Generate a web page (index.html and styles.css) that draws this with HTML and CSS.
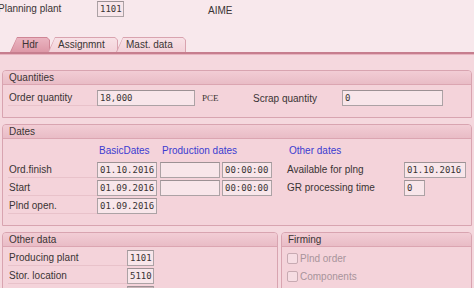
FILE: index.html
```html
<!DOCTYPE html>
<html lang="en">
<head>
  <meta charset="UTF-8">
  <title>Production order header</title>
  <link rel="stylesheet" href="styles.css">
</head>
<body>
  <div class="top">
    <div class="toprow">
      <span class="lbl-plant">Planning plant</span>
      <span class="field w26">1101</span>
      <span class="aime">AIME</span>
    </div>
  </div>

  <div class="tabs">
    <div class="tab active"><span>Hdr</span></div>
    <div class="tab"><span>Assignmnt</span></div>
    <div class="tab"><span>Mast. data</span></div>
  </div>
  <div class="tabline"></div>

  <div class="content">
    <div class="group">
      <div class="ghead">Quantities</div>
      <div class="gbody qty">
        <span class="lbl">Order quantity</span>
        <span class="field w98">18,000</span>
        <span class="unit">PCE</span>
        <span class="lbl2">Scrap quantity</span>
        <span class="field w101">0</span>
      </div>
    </div>

    <div class="group">
      <div class="ghead">Dates</div>
      <div class="gbody dates">
        <span></span>
        <span class="colhead">BasicDates</span>
        <span class="colhead span2">Production dates</span>
        <span class="colhead span2">Other dates</span>

        <span class="lbl">Ord.finish</span>
        <span><span class="field w60">01.10.2016</span></span>
        <span><span class="field w60"></span></span>
        <span><span class="field w50">00:00:00</span></span>
        <span class="lbl plain">Available for plng</span>
        <span><span class="field w62">01.10.2016</span></span>

        <span class="lbl">Start</span>
        <span><span class="field w60">01.09.2016</span></span>
        <span><span class="field w60"></span></span>
        <span><span class="field w50">00:00:00</span></span>
        <span class="lbl plain">GR processing time</span>
        <span><span class="field w21">0</span></span>

        <span class="lbl">Plnd open.</span>
        <span><span class="field w60">01.09.2016</span></span>
      </div>
    </div>

    <div class="split">
      <div class="group other">
        <div class="ghead">Other data</div>
        <div class="gbody rows">
          <div class="row"><span class="lbl wide">Producing plant</span><span class="field w26">1101</span></div>
          <div class="row"><span class="lbl wide">Stor. location</span><span class="field w26">5110</span></div>
          <div class="row"><span class="lbl wide"></span><span class="field w26 off"></span></div>
        </div>
      </div>
      <div class="group firming">
        <div class="ghead">Firming</div>
        <div class="gbody rows">
          <div class="row check"><span class="box"></span>Plnd order</div>
          <div class="row check"><span class="box"></span>Components</div>
        </div>
      </div>
    </div>
  </div>
</body>
</html>
```

FILE: styles.css
```css
body {
  margin: 0;
  width: 474px;
  height: 288px;
  overflow: hidden;
  font-family: "Liberation Sans", Arial, sans-serif;
  font-size: 10px;
  color: #3a3434;
  background: #f5d8de;
}

.top {
  height: 37px;
  background: #f8e8ec;
}
.toprow {
  display: flex;
  align-items: center;
  height: 17px;
}
.lbl-plant {
  width: 99px;
  margin-left: -2px;
}
.aime {
  margin-left: 84px;
  margin-top: 3px;
}

.field {
  display: inline-block;
  box-sizing: border-box;
  height: 16px;
  line-height: 14px;
  padding: 0 2px;
  border: 1px solid #aca2a5;
  border-top-color: #9c9194;
  background: #f8e6ea;
  font-family: "DejaVu Sans Mono", "Liberation Mono", monospace;
  font-size: 9px;
  color: #3a3434;
  white-space: nowrap;
  overflow: hidden;
}
.field.off {
  background: #c9b3b8;
}
.w21 { width: 21px; }
.w26 { width: 27px; }
.w50 { width: 50px; }
.w60 { width: 60px; }
.w62 { width: 62px; }
.w98 { width: 98px; }
.w101 { width: 101px; }

/* tabs */
.tabs {
  display: flex;
  align-items: flex-end;
  height: 15px;
  padding-left: 10px;
  background: #f8e8ec;
}
.tab {
  position: relative;
  height: 15px;
  width: 70px;
  margin-right: -2px;
  background: #d9a3af;
  clip-path: polygon(0 100%, 7px 0, calc(100% - 3px) 0, 100% 3px, 100% 100%);
}
.tab::before {
  content: "";
  position: absolute;
  inset: 1px 1px 0 1px;
  background: linear-gradient(#f8e1e6, #f3d2d9);
  clip-path: polygon(0 100%, 6px 0, calc(100% - 2px) 0, 100% 2px, 100% 100%);
}
.tab span {
  position: relative;
  display: block;
  padding-left: 10px;
  line-height: 15px;
}
.tab.active {
  width: 40px;
  background: #cf8595;
}
.tab.active::before {
  background: linear-gradient(#eab4c0, #dd98a7);
}
.tab.active span {
  padding-left: 12px;
}
.tabline {
  height: 2px;
  background: #c67e8e;
  border-bottom: 1px solid #e7b3bf;
}

/* groups */
.content {
  padding: 15px 2px 0;
}
.group {
  border: 1px solid #d8a4b0;
  border-radius: 4px 4px 0 0;
  background: #f4d3da;
  margin-bottom: 6px;
}
.ghead {
  height: 13px;
  line-height: 13px;
  padding-left: 6px;
  background: linear-gradient(#f2cdd5, #e9bcc6);
  border-bottom: 1px solid #dba5b1;
  border-radius: 3px 3px 0 0;
}
.gbody {
  padding: 5px 0 11px 5px;
}

.lbl {
  display: inline-block;
  box-sizing: border-box;
  width: 89px;
  height: 16px;
  line-height: 15px;
  padding-left: 1px;
  border-bottom: 1px solid #e8c2ca;
}
.lbl.plain {
  border-bottom: none;
}
.lbl.wide {
  width: 119px;
}

.qty {
  display: flex;
  align-items: center;
}
.unit {
  margin-left: 7px;
  width: 51px;
  font-family: "Liberation Serif", serif;
  font-size: 9px;
}
.lbl2 {
  width: 89px;
}

.dates {
  display: grid;
  grid-template-columns: 89px 63px 62px 65px 117px 62px;
  grid-auto-rows: 16px;
  row-gap: 2px;
  padding-top: 5px;
}
.dates > span {
  display: block;
}
.colhead {
  color: #3b3bd0;
  padding-left: 2px;
  line-height: 14px;
  height: 14px;
  align-self: start;
  white-space: nowrap;
}
.dates .colhead.span2 {
  grid-column: span 2;
}
.dates .colhead:last-child {
  padding-left: 0;
}
.dates .lbl.plain {
  padding-left: 0;
}

.split {
  display: flex;
  gap: 3px;
}
.other {
  width: 274px;
}
.firming {
  flex: 1;
}
.rows {
  display: flex;
  flex-direction: column;
  gap: 2px;
  padding-top: 3px;
}
.row {
  display: flex;
  align-items: center;
  height: 16px;
}
.check {
  color: #a8939a;
}
.box {
  box-sizing: border-box;
  width: 11px;
  height: 11px;
  margin-right: 2px;
  border: 1px solid #c7aab2;
  border-radius: 2px;
  background: #f6dde3;
}
```
